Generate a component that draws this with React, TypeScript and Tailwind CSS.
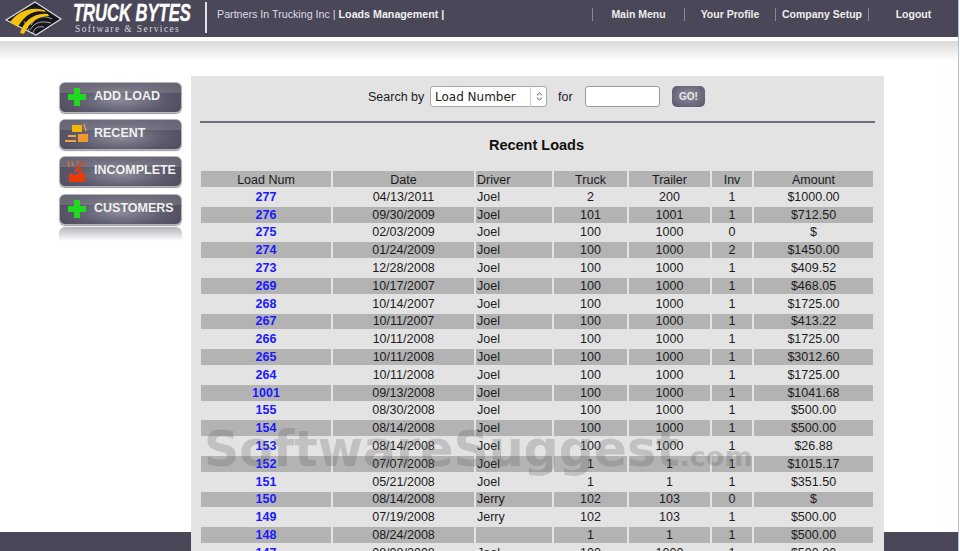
import { ChevronsUpDown } from "lucide-react";
import type { ReactNode } from "react";

const rows: string[][] = [
  ["277", "04/13/2011", "Joel", "2", "200", "1", "$1000.00"],
  ["276", "09/30/2009", "Joel", "101", "1001", "1", "$712.50"],
  ["275", "02/03/2009", "Joel", "100", "1000", "0", "$"],
  ["274", "01/24/2009", "Joel", "100", "1000", "2", "$1450.00"],
  ["273", "12/28/2008", "Joel", "100", "1000", "1", "$409.52"],
  ["269", "10/17/2007", "Joel", "100", "1000", "1", "$468.05"],
  ["268", "10/14/2007", "Joel", "100", "1000", "1", "$1725.00"],
  ["267", "10/11/2007", "Joel", "100", "1000", "1", "$413.22"],
  ["266", "10/11/2008", "Joel", "100", "1000", "1", "$1725.00"],
  ["265", "10/11/2008", "Joel", "100", "1000", "1", "$3012.60"],
  ["264", "10/11/2008", "Joel", "100", "1000", "1", "$1725.00"],
  ["1001", "09/13/2008", "Joel", "100", "1000", "1", "$1041.68"],
  ["155", "08/30/2008", "Joel", "100", "1000", "1", "$500.00"],
  ["154", "08/14/2008", "Joel", "100", "1000", "1", "$500.00"],
  ["153", "08/14/2008", "Joel", "100", "1000", "1", "$26.88"],
  ["152", "07/07/2008", "Joel", "1", "1", "1", "$1015.17"],
  ["151", "05/21/2008", "Joel", "1", "1", "1", "$351.50"],
  ["150", "08/14/2008", "Jerry", "102", "103", "0", "$"],
  ["149", "07/19/2008", "Jerry", "102", "103", "1", "$500.00"],
  ["148", "08/24/2008", "", "1", "1", "1", "$500.00"],
  ["147", "08/08/2008", "Joel", "100", "1000", "1", "$500.00"],
];

const headers = ["Load Num", "Date", "Driver", "Truck", "Trailer", "Inv", "Amount"];
const widths = ["w-[130px]", "w-[141px]", "w-[76px]", "w-[73px]", "w-[81px]", "w-[40px]", "w-[119px]"];

function Logo() {
  return (
    <svg width="60" height="35" viewBox="0 0 60 35" className="shrink-0">
      <path d="M32 1 L58 18 L33 34 L3 19 Z" fill="#17171d" stroke="#dcdce2" strokeWidth="1.2" />
      <path d="M28 24 C32 15 42 14 49 18" fill="none" stroke="#c9c9d2" strokeWidth="0.8" />
      <path d="M27 29 C32 20 40 20 48 22" fill="none" stroke="#c9c9d2" strokeWidth="0.8" />
      <path d="M30 32 C31 27 35 25 41 26" fill="none" stroke="#c9c9d2" strokeWidth="0.8" />
      <path d="M21 20 C22 24 25 26 26 30" fill="none" stroke="#c9c9d2" strokeWidth="0.7" />
      <path d="M7 21 C14 12 26 5 41 9 L43 11 C30 8 21 15 15 26 Z" fill="#f4c20d" />
      <path d="M17 32 C20 21 31 11 45 13 L46 15 C34 15 26 22 21 33 Z" fill="#f4c20d" />
    </svg>
  );
}

function NavLink({ label, width }: { label: string; width: string }) {
  return (
    <span className={`${width} flex h-[13px] items-center justify-center border-l border-[#8b8996] text-[10.5px] font-bold text-[#eeeeee]`}>
      {label}
    </span>
  );
}

function Plus() {
  return (
    <svg width="20" height="20" viewBox="0 0 20 20">
      <path d="M7 1h6v6h6v6h-6v6H7v-6H1V7h6z" fill="#1fd81f" />
    </svg>
  );
}

function RecentIcon() {
  return (
    <svg width="24" height="20" viewBox="0 0 24 20">
      <rect x="7" y="1" width="10" height="7" fill="#f2b705" />
      <path d="M19 0l2 7" stroke="#e8a33a" strokeWidth="1.4" />
      <rect x="13" y="10" width="10" height="8" fill="#f0982c" />
      <rect x="3" y="11" width="8" height="2" fill="#f0a83c" />
      <rect x="0" y="16" width="11" height="2" fill="#f0a83c" />
    </svg>
  );
}

function IncompleteIcon() {
  return (
    <svg width="20" height="24" viewBox="0 0 20 24">
      <path d="M2 14l6 2 4-2 6 0v9H2z" fill="#ea3a0c" />
      <path d="M7 13l5-8 2 2-4 6zM11 13l4-4 1 1-3 4z" fill="#ea3a0c" />
      <circle cx="16" cy="4" r="1.6" fill="#ea3a0c" />
      <path d="M1 2l1 6M5 3l1 4M10 2l2 2" stroke="#e8742c" strokeWidth="1.3" />
    </svg>
  );
}

function SideButton({ icon, label }: { icon: ReactNode; label: string }) {
  return (
    <div className="relative flex h-[31px] w-[123px] items-center overflow-hidden rounded-[6px] border border-[#b4b4bc] bg-[radial-gradient(ellipse_at_50%_60%,#8a8a98_0%,#5a586a_55%,#4a4759_100%)] shadow-[0_1px_1px_#9a9a9a]">
      <div className="absolute inset-x-0 top-0 h-[10px] bg-white/15" />
      <div className="relative -mt-[2px] flex w-[34px] shrink-0 justify-center">{icon}</div>
      <span className="relative -mt-[2px] whitespace-nowrap text-[12.5px] font-bold text-[#f0f0f0]">{label}</span>
    </div>
  );
}

export default function App() {
  return (
    <div className="relative h-[551px] w-[960px] overflow-hidden bg-white font-['Liberation_Sans',Arial,sans-serif] text-[#1c1c1c]">
      <div className="absolute bottom-0 left-0 h-[19px] w-[958px] bg-[#4a4759]" />
      <div className="absolute inset-y-0 left-[958px] w-[1px] bg-[#a9c3de]" />

      <header className="relative flex h-[37px] w-[958px] items-start bg-[#4a4759]">
        <div className="ml-[3px] mt-[1px] w-[60px]">
          <Logo />
        </div>
        <div className="ml-[10px] flex w-[122px] flex-col items-start pt-[3px]">
          <span className="origin-left scale-x-[0.69] whitespace-nowrap text-[24px] font-bold italic leading-[20px] text-white [-webkit-text-stroke:0.4px_white]">
            TRUCK BYTES
          </span>
          <span className="ml-[2px] mt-[1px] whitespace-nowrap font-['Liberation_Serif',serif] text-[9.5px] leading-[10px] tracking-[1.4px] text-[#d5d5dc]">
            Software &amp; Services
          </span>
        </div>
        <div className="ml-[10px] mt-[2px] h-[31px] w-[2px] bg-[#e0e0e4]" />
        <div className="ml-[10px] mt-[8px] w-[375px] whitespace-nowrap text-[10.7px] leading-[13px] text-[#dcdce2]">
          Partners In Trucking Inc | <span className="font-bold text-[#f0f0f0]">Loads Management |</span>
        </div>
        <div className="mt-[8px] flex">
          <NavLink label="Main Menu" width="w-[92px]" />
          <NavLink label="Your Profile" width="w-[91px]" />
          <NavLink label="Company Setup" width="w-[93px]" />
          <NavLink label="Logout" width="w-[90px]" />
        </div>
      </header>

      <div className="relative mt-[4px] h-[20px] w-[958px] bg-gradient-to-b from-[#d9d9d9] to-white" />

      <div className="relative mt-[15px] flex items-start">
        <aside className="ml-[59px] flex w-[132px] flex-col gap-[6px] pt-[6px]">
          <SideButton icon={<Plus />} label="ADD LOAD" />
          <SideButton icon={<RecentIcon />} label="RECENT" />
          <SideButton icon={<IncompleteIcon />} label="INCOMPLETE" />
          <div className="mt-[1px]">
            <SideButton icon={<Plus />} label="CUSTOMERS" />
          </div>
          <div className="-mt-[4px] h-[14px] w-[123px] rounded-t-[6px] bg-gradient-to-b from-[#b4b4bc] to-white" />
        </aside>

        <main className="h-[475px] w-[693px] overflow-hidden bg-[#e3e3e3] pl-[8px]">
          <div className="ml-[1px] flex h-[47px] w-[675px] items-start border-b-2 border-[#6f6f7d] pt-[10px]">
            <div className="flex h-[21px] items-center pl-[168px] text-[12.5px]">
              <span className="w-[62px] pt-[1px]">Search by</span>
              <div className="relative h-[21px] w-[117px]">
                <select className="h-full w-full appearance-none rounded-[3px] border border-[#a8a8a8] bg-white pl-[4px] font-['DejaVu_Sans',sans-serif] text-[12px] text-[#222]">
                  <option>Load Number</option>
                </select>
                <div className="absolute right-0 top-0 flex h-full w-[17px] items-center justify-center border-l border-[#cccccc]">
                  <ChevronsUpDown size={11} strokeWidth={1.6} />
                </div>
              </div>
              <span className="ml-[11px] w-[27px] pt-[1px]">for</span>
              <input className="h-[21px] w-[75px] rounded-[3px] border border-[#a09a94] bg-white" />
              <div className="ml-[12px] flex h-[21px] w-[33px] items-center justify-center rounded-[5px] bg-[radial-gradient(ellipse_at_50%_45%,#8e8e9c_0%,#55536a_100%)] text-[10px] font-bold text-[#e8e8e8]">
                GO!
              </div>
            </div>
          </div>

          <h1 className="mt-[14px] w-[675px] text-center text-[14.5px] font-bold leading-[16px] text-[#111]">Recent Loads</h1>

          <table className="mt-[16px] table-fixed border-separate border-spacing-x-[2px] border-spacing-y-[2px] text-[12.5px] leading-[14px]">
            <thead>
              <tr className="h-[16px]">
                {headers.map((h, i) => (
                  <th key={h} className={`${widths[i]} bg-[#b3b3b3] p-0 pt-[1px] font-normal ${h === "Driver" ? "pl-[1px] text-left" : "text-center"}`}>
                    {h}
                  </th>
                ))}
              </tr>
            </thead>
            <tbody>
              {rows.map((r, i) => (
                <tr key={r[0]} className={`h-[15.8px] ${i % 2 === 1 ? "bg-[#b3b3b3]" : ""}`}>
                  <td className="p-0 text-center font-bold text-[#1a1aff]">{r[0]}</td>
                  <td className="p-0 text-center">{r[1]}</td>
                  <td className="p-0 pl-[1px] text-left">{r[2]}</td>
                  <td className="p-0 text-center">{r[3]}</td>
                  <td className="p-0 text-center">{r[4]}</td>
                  <td className="p-0 text-center">{r[5]}</td>
                  <td className="p-0 text-center">{r[6]}</td>
                </tr>
              ))}
            </tbody>
          </table>
        </main>
      </div>

      <div className="pointer-events-none absolute left-[204px] top-[420px] whitespace-nowrap font-['DejaVu_Sans',sans-serif] text-[49px] font-bold leading-[60px] text-[#5a5a5a]/25">
        SoftwareSuggest<span className="text-[27px]">.com</span>
      </div>
    </div>
  );
}
